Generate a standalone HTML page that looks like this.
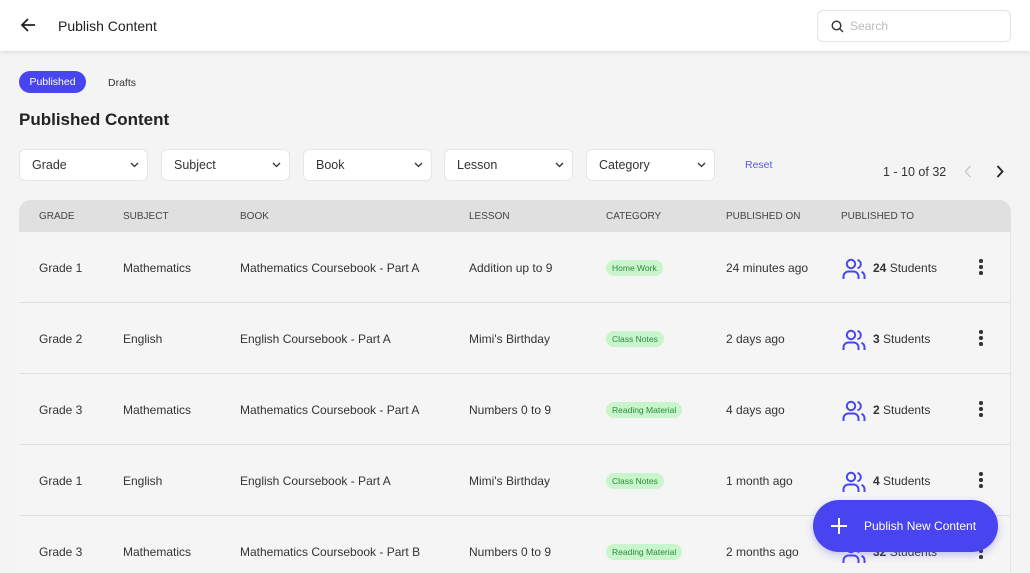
<!DOCTYPE html>
<html><head><style>
*{box-sizing:border-box;margin:0;padding:0}
html,body{width:1030px;height:573px;overflow:hidden}
body{background:#f4f4f4;font-family:"Liberation Sans",sans-serif;color:#2a2a2a;position:relative}
.top{position:absolute;left:0;top:0;width:1030px;height:51px;background:#fff;box-shadow:0 2px 4px rgba(0,0,0,.08)}
.abs{position:absolute}
.sel{position:absolute;top:149px;width:129px;height:32px;background:#fff;border:1px solid #e6e6e6;border-radius:6px;font-size:12.5px;color:#333;padding:8px 0 0 12px}
.sel svg{position:absolute;right:8px;top:12px}
.table{position:absolute;left:19px;top:200px;width:992px;height:400px;border-radius:12px 12px 0 0;overflow:hidden;background:#f5f5f5;border-right:1px solid #e3e3e3}
.hd{height:32px;background:#e0e0e0;position:relative;font-size:10px;color:#444}
.hd span{position:absolute;top:11px}
.row{height:71px;border-bottom:1px solid #e0e0e0;position:relative;font-size:12px;color:#333}
.row>span{position:absolute;top:29px}
.tag{position:absolute;top:28px;left:587px;background:#c8f5cc;color:#2d8a3e;font-size:8.5px;padding:3px 6px;border-radius:8px}
.users{position:absolute;left:823px;top:26px}
.stu{position:absolute;left:854px;top:29px}
.dots{position:absolute;left:960px;top:27px;width:4px}
.dots i{display:block;width:3.5px;height:3.5px;border-radius:50%;background:#333;margin-bottom:2.5px}
</style></head><body>
<div class="top">
<svg class="abs" style="left:20px;top:17px" width="16" height="16" viewBox="0 0 16 16"><path d="M15 8H2M8 2L2 8l6 6" stroke="#222" stroke-width="1.8" fill="none"/></svg>
<div class="abs" style="left:58px;top:18px;font-size:14px;color:#222">Publish Content</div>
<div class="abs" style="left:817px;top:10px;width:194px;height:32px;border:1px solid #e4e4e4;border-radius:6px">
<svg class="abs" style="left:13px;top:9px" width="13" height="13" viewBox="0 0 13 13"><circle cx="5.5" cy="5.5" r="4.3" stroke="#333" stroke-width="1.4" fill="none"/><path d="M8.7 8.7L12 12" stroke="#333" stroke-width="1.4"/></svg>
<span class="abs" style="left:32px;top:8px;font-size:12px;color:#bbb">Search</span></div>
</div>
<div class="abs" style="left:19px;top:71px;width:67px;height:22px;background:#4845f0;border-radius:11px;color:#fff;font-size:10.5px;text-align:center;line-height:23px">Published</div>
<div class="abs" style="left:108px;top:77px;font-size:10.5px;color:#333">Drafts</div>
<div class="abs" style="left:19px;top:110px;font-size:17px;font-weight:bold;color:#222">Published Content</div>
<div class="sel" style="left:19px">Grade<svg width="9" height="6" viewBox="0 0 9 6"><path d="M1 1l3.5 3.5L8 1" stroke="#333" stroke-width="1.3" fill="none"/></svg></div>
<div class="sel" style="left:161px">Subject<svg width="9" height="6" viewBox="0 0 9 6"><path d="M1 1l3.5 3.5L8 1" stroke="#333" stroke-width="1.3" fill="none"/></svg></div>
<div class="sel" style="left:303px">Book<svg width="9" height="6" viewBox="0 0 9 6"><path d="M1 1l3.5 3.5L8 1" stroke="#333" stroke-width="1.3" fill="none"/></svg></div>
<div class="sel" style="left:444px">Lesson<svg width="9" height="6" viewBox="0 0 9 6"><path d="M1 1l3.5 3.5L8 1" stroke="#333" stroke-width="1.3" fill="none"/></svg></div>
<div class="sel" style="left:586px">Category<svg width="9" height="6" viewBox="0 0 9 6"><path d="M1 1l3.5 3.5L8 1" stroke="#333" stroke-width="1.3" fill="none"/></svg></div>
<div class="abs" style="left:745px;top:159px;font-size:10.5px;color:#5a55e8">Reset</div>
<div class="abs" style="left:883px;top:165px;font-size:12.5px;color:#333">1 - 10 of 32</div>
<svg class="abs" style="left:964px;top:165px" width="8" height="13" viewBox="0 0 8 13"><path d="M6.5 1L1.5 6.5l5 5.5" stroke="#ccc" stroke-width="1.5" fill="none"/></svg>
<svg class="abs" style="left:996px;top:165px" width="8" height="13" viewBox="0 0 8 13"><path d="M1.5 1l5 5.5-5 5.5" stroke="#222" stroke-width="1.8" fill="none"/></svg>
<div class="table">
<div class="hd"><span style="left:20px">GRADE</span><span style="left:104px">SUBJECT</span><span style="left:221px">BOOK</span><span style="left:450px">LESSON</span><span style="left:587px">CATEGORY</span><span style="left:707px">PUBLISHED ON</span><span style="left:822px">PUBLISHED TO</span></div>
<div class="row"><span style="left:20px">Grade 1</span><span style="left:104px">Mathematics</span><span style="left:221px">Mathematics Coursebook - Part A</span><span style="left:450px">Addition up to 9</span><div class="tag">Home Work</div><span style="left:707px">24 minutes ago</span><svg class="users" width="24" height="22" viewBox="0 0 24 22"><circle cx="9" cy="6" r="4.2" stroke="#4845f0" stroke-width="2" fill="none"/><path d="M1.5 21v-2.5a5 5 0 0 1 5-5h5a5 5 0 0 1 5 5V21M15.5 2a4.2 4.2 0 0 1 0 8.2M19.5 13.8a5 5 0 0 1 3 4.7V21" stroke="#4845f0" stroke-width="2" fill="none"/></svg><span class="stu"><b>24</b> Students</span><div class="dots"><i></i><i></i><i></i></div></div>
<div class="row"><span style="left:20px">Grade 2</span><span style="left:104px">English</span><span style="left:221px">English Coursebook - Part A</span><span style="left:450px">Mimi's Birthday</span><div class="tag">Class Notes</div><span style="left:707px">2 days ago</span><svg class="users" width="24" height="22" viewBox="0 0 24 22"><circle cx="9" cy="6" r="4.2" stroke="#4845f0" stroke-width="2" fill="none"/><path d="M1.5 21v-2.5a5 5 0 0 1 5-5h5a5 5 0 0 1 5 5V21M15.5 2a4.2 4.2 0 0 1 0 8.2M19.5 13.8a5 5 0 0 1 3 4.7V21" stroke="#4845f0" stroke-width="2" fill="none"/></svg><span class="stu"><b>3</b> Students</span><div class="dots"><i></i><i></i><i></i></div></div>
<div class="row"><span style="left:20px">Grade 3</span><span style="left:104px">Mathematics</span><span style="left:221px">Mathematics Coursebook - Part A</span><span style="left:450px">Numbers 0 to 9</span><div class="tag">Reading Material</div><span style="left:707px">4 days ago</span><svg class="users" width="24" height="22" viewBox="0 0 24 22"><circle cx="9" cy="6" r="4.2" stroke="#4845f0" stroke-width="2" fill="none"/><path d="M1.5 21v-2.5a5 5 0 0 1 5-5h5a5 5 0 0 1 5 5V21M15.5 2a4.2 4.2 0 0 1 0 8.2M19.5 13.8a5 5 0 0 1 3 4.7V21" stroke="#4845f0" stroke-width="2" fill="none"/></svg><span class="stu"><b>2</b> Students</span><div class="dots"><i></i><i></i><i></i></div></div>
<div class="row"><span style="left:20px">Grade 1</span><span style="left:104px">English</span><span style="left:221px">English Coursebook - Part A</span><span style="left:450px">Mimi's Birthday</span><div class="tag">Class Notes</div><span style="left:707px">1 month ago</span><svg class="users" width="24" height="22" viewBox="0 0 24 22"><circle cx="9" cy="6" r="4.2" stroke="#4845f0" stroke-width="2" fill="none"/><path d="M1.5 21v-2.5a5 5 0 0 1 5-5h5a5 5 0 0 1 5 5V21M15.5 2a4.2 4.2 0 0 1 0 8.2M19.5 13.8a5 5 0 0 1 3 4.7V21" stroke="#4845f0" stroke-width="2" fill="none"/></svg><span class="stu"><b>4</b> Students</span><div class="dots"><i></i><i></i><i></i></div></div>
<div class="row"><span style="left:20px">Grade 3</span><span style="left:104px">Mathematics</span><span style="left:221px">Mathematics Coursebook - Part B</span><span style="left:450px">Numbers 0 to 9</span><div class="tag">Reading Material</div><span style="left:707px">2 months ago</span><svg class="users" width="24" height="22" viewBox="0 0 24 22"><circle cx="9" cy="6" r="4.2" stroke="#4845f0" stroke-width="2" fill="none"/><path d="M1.5 21v-2.5a5 5 0 0 1 5-5h5a5 5 0 0 1 5 5V21M15.5 2a4.2 4.2 0 0 1 0 8.2M19.5 13.8a5 5 0 0 1 3 4.7V21" stroke="#4845f0" stroke-width="2" fill="none"/></svg><span class="stu"><b>32</b> Students</span><div class="dots"><i></i><i></i><i></i></div></div>
</div>
<div class="abs" style="left:813px;top:500px;width:185px;height:52px;border-radius:26px;background:#4845f0;box-shadow:0 3px 8px rgba(72,69,240,.3);color:#fff">
<svg class="abs" style="left:17px;top:17px" width="18" height="18" viewBox="0 0 18 18"><path d="M9 1v16M1 9h16" stroke="#fff" stroke-width="2"/></svg>
<span class="abs" style="left:51px;top:19px;font-size:12px">Publish New Content</span></div>
</body></html>
